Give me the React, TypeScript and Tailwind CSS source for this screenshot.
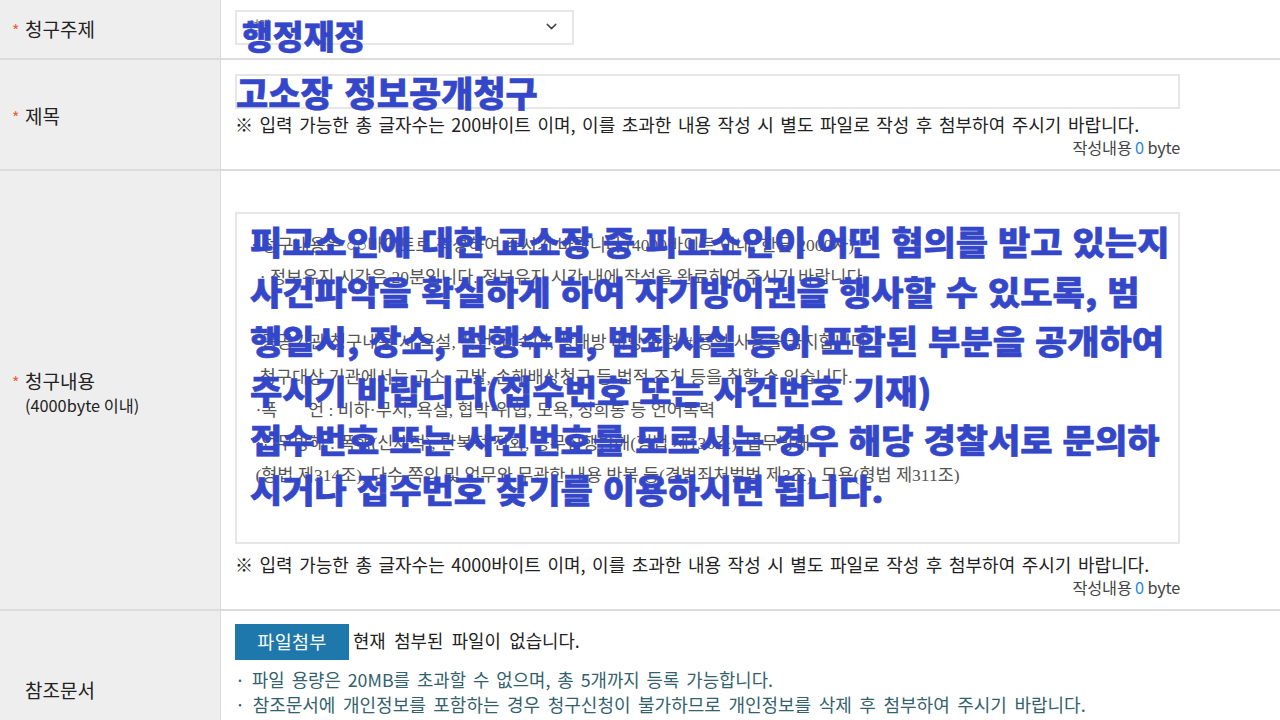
import { ChevronDown } from "lucide-react";

const sans = "font-['Noto_Sans_CJK_KR',sans-serif]";
const overlay = "absolute whitespace-nowrap font-black text-[#3547c9] [-webkit-text-stroke:0.6px_#3547c9] font-['Noto_Sans_CJK_KR',sans-serif]";

function Label({ star, low, children }: { star?: boolean; low?: boolean; children: React.ReactNode }) {
  return (
    <div className={`w-[221px] shrink-0 bg-[#eeeeee] border-r border-[#d9d9d9] flex items-center pl-[25px] ${low ? "pt-[4px]" : ""}`}>
      <div className="text-[19px] leading-[24px] text-[#222]">
        {star ? <span className="inline-block w-[13px] -ml-[13px] text-[#e8623a] text-[16px]">*</span> : null}
        {children}
      </div>
    </div>
  );
}

function Count() {
  return (
    <div className="text-right text-[16.3px] leading-[20px] tracking-[-0.2px] text-[#444]">
      작성내용 <span className="text-[#1e88e5]">0</span> byte
    </div>
  );
}

const hidden = [
  ["pt-0", "· 청구내용은 ○○바이트로 작성하여 주시기 바랍니다.(4000바이트 이내, 한글 2000자)"],
  ["pt-[8px]", "  · 정보유지 시간은 20분입니다. 정보유지 시간 내에 작성을 완료하여 주시기 바랍니다."],
  ["pt-[41px]", "· 공공기관 청구내용 시 욕설, 폭언, 비속어, 상대방 비방 표현 # 등의 사용을 금지합니다."],
  ["pt-[11px]", "  청구대상 기관에서는 고소, 고발, 손해배상청구 등 법적 조치 등을 취할 수 있습니다."],
  ["pt-[9px]", " ·폭       언 : 비하·무시, 욕설, 협박·위협, 모욕, 성희롱 등 언어폭력"],
  ["pt-[9px]", " ·업무방해 : 폭행(신체적), 반복적 전화, 공무집행방해(형법 제136조), 업무방해"],
  ["pt-[8px]", " (형법 제314조), 다수 쪽의 및 업무와 무관한 내용 반복 등(경범죄처벌법 제3조), 모욕(형법 제311조)"],
];

const big = [
  "피고소인에 대한 교소장 중 피고소인이 어떤 혐의를 받고 있는지",
  "사건파악을 확실하게 하여 자기방어권을 행사할 수 있도록, 범",
  "행일시, 장소, 범행수법, 범죄사실 등이 포함된 부분을 공개하여",
  "주시기 바랍니다(접수번호 또는 사건번호 기재)",
  "접수번호 또는 사건번호를 모르시는 경우 해당 경찰서로 문의하",
  "시거나 접수번호 찾기를 이용하시면 됩니다.",
];

export default function App() {
  return (
    <div className={`h-[720px] w-[1280px] overflow-hidden bg-white flex flex-col ${sans}`}>
      <div className="flex h-[60px] shrink-0 border-b-2 border-[#dcdcdc]">
        <Label star>청구주제</Label>
        <div className="flex-1 pl-[14px] pt-[10px]">
          <div className="relative w-[339px] h-[35px] border-2 border-[#e6e6e6] flex items-center justify-between pl-[11px] pr-[12px]">
            <span className="text-[12px] text-[#666] -mt-[6px]">선택</span>
            <ChevronDown size={17} strokeWidth={2} className="text-[#444] -mt-[3px]" />
            <span className={`${overlay} left-[5px] top-[3px] text-[33.5px] leading-[40px]`}>행정재정</span>
          </div>
        </div>
      </div>

      <div className="flex h-[111px] shrink-0 border-b-2 border-[#dcdcdc]">
        <Label star low>제목</Label>
        <div className="flex-1 pl-[14px] pr-[100px] pt-[14px]">
          <div className="relative h-[35px] border-2 border-[#e6e6e6]">
            <span className={`${overlay} -left-[1px] -top-[4px] text-[35px] leading-[40px] [word-spacing:4px]`}>고소장 정보공개청구</span>
          </div>
          <div className="mt-[2px] text-[18px] leading-[26px] [word-spacing:2.5px] text-[#222] whitespace-nowrap">
            ※ 입력 가능한 총 글자수는 200바이트 이며, 이를 초과한 내용 작성 시 별도 파일로 작성 후 첨부하여 주시기 바랍니다.
          </div>
          <Count />
        </div>
      </div>

      <div className="flex h-[440px] shrink-0 border-b-2 border-[#dcdcdc]">
        <Label star low>
          청구내용
          <div className="text-[16.3px] leading-[22px]">(4000byte 이내)</div>
        </Label>
        <div className="flex-1 pl-[14px] pr-[100px] pt-[41px]">
          <div className="relative h-[332px] border-2 border-[#e6e6e6] pt-[19px] pl-[14px] text-[#555] text-[17.5px] leading-[24px] font-['Liberation_Serif','Noto_Sans_CJK_KR',serif] whitespace-pre">
            {hidden.map(([pad, t]) => (
              <div key={t} className={pad}>{t}</div>
            ))}
            <div className="absolute left-[13px] top-[2px]">
              {big.map((t) => (
                <div key={t} className={`${overlay} relative origin-left scale-x-[1.08] text-[32.5px] leading-[49.6px] [word-spacing:1.8px]`}>{t}</div>
              ))}
            </div>
          </div>
          <div className="mt-[7px] text-[18px] leading-[26px] [word-spacing:2.5px] text-[#222] whitespace-nowrap">
            ※ 입력 가능한 총 글자수는 4000바이트 이며, 이를 초과한 내용 작성 시 별도 파일로 작성 후 첨부하여 주시기 바랍니다.
          </div>
          <Count />
        </div>
      </div>

      <div className="flex h-[158px] shrink-0">
        <Label>참조문서</Label>
        <div className="flex-1 pl-[14px] pt-[13px]">
          <div className="flex items-center h-[36px]">
            <div className="w-[114px] h-[36px] bg-[#1f78ab] text-white text-[18.5px] tracking-[0.3px] flex items-center justify-center">파일첨부</div>
            <span className="ml-[4px] -mt-[3px] text-[17.8px] [word-spacing:4.5px] text-[#222]">현재 첨부된 파일이 없습니다.</span>
          </div>
          <div className="mt-[7px] leading-[25px] text-[#33626e] whitespace-nowrap">
            <div className="text-[17.8px] [word-spacing:3px]">· 파일 용량은 20MB를 초과할 수 없으며, 총 5개까지 등록 가능합니다.</div>
            <div className="text-[18px] [word-spacing:3.5px]">· 참조문서에 개인정보를 포함하는 경우 청구신청이 불가하므로 개인정보를 삭제 후 첨부하여 주시기 바랍니다.</div>
          </div>
        </div>
      </div>
    </div>
  );
}
